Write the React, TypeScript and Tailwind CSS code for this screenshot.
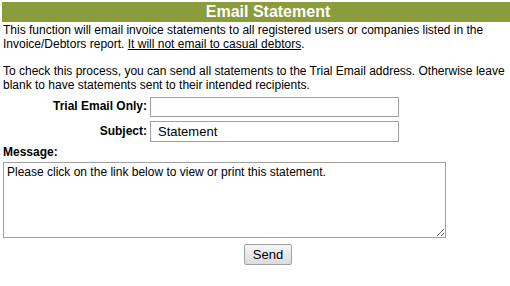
import React from "react";

export default function App() {
  return (
    <div className="w-[510px] h-[286px] overflow-hidden bg-white">
      <div
        className="w-[532px] ml-[2px] pt-[2px] text-black text-[12px] leading-[1.15]"
        style={{ fontFamily: '"Liberation Sans", Arial, sans-serif' }}
      >
        <div className="h-[20px] bg-[#8a9c3b] text-white font-bold text-[16px] leading-[20px] text-center">
          Email Statement
        </div>
        <div className="pl-[1px] mt-[2px] whitespace-nowrap">
          This function will email invoice statements to all registered users or companies listed in the
          <br />
          Invoice/Debtors report. <span className="underline">It will not email to casual debtors</span>.
          <br />
          <br />
          To check this process, you can send all statements to the Trial Email address. Otherwise leave
          <br />
          blank to have statements sent to their intended recipients.
        </div>
        <div className="mt-[4px] flex flex-col gap-[4px]">
          <div className="flex items-center">
            <div className="w-[148px] pr-[3px] text-right font-bold">Trial Email Only:</div>
            <input
              type="text"
              className="w-[249px] h-[20px] border border-[#a0a0a0] px-[7px] text-[13px] outline-none"
            />
          </div>
          <div className="flex items-center">
            <div className="w-[148px] pr-[3px] text-right font-bold">Subject:</div>
            <input
              type="text"
              defaultValue="Statement"
              className="w-[249px] h-[21px] border border-[#a0a0a0] px-[7px] text-[13px] outline-none"
            />
          </div>
        </div>
        <div className="pl-[1px] mt-[4px] font-bold">Message:</div>
        <div className="pl-[1px] mt-[2px]">
          <textarea
            defaultValue="Please click on the link below to view or print this statement."
            className="block w-[443px] h-[76px] border border-[#a0a0a0] px-[3px] py-[3px] text-[12px] leading-[1.15] outline-none resize"
          />
        </div>
        <div className="mt-[6px] flex justify-center">
          <button className="w-[48px] h-[21px] border border-[#a0a0a0] rounded-[2px] bg-gradient-to-b from-[#f6f6f6] to-[#dcdcdc] text-[13px] leading-[19px]">
            Send
          </button>
        </div>
      </div>
    </div>
  );
}
